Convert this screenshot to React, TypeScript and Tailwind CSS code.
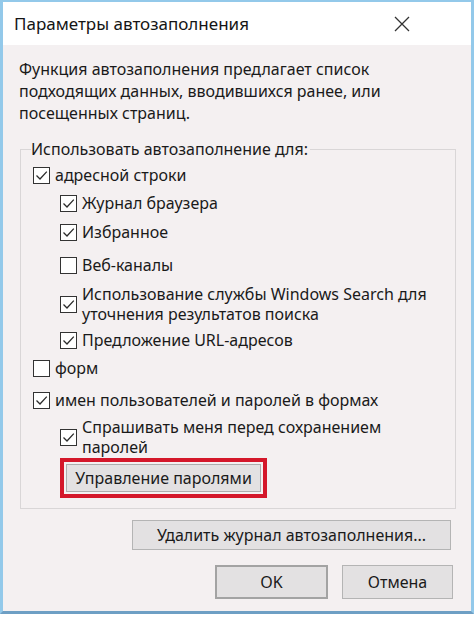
import type { ReactNode } from 'react';

const Box = ({ checked }: { checked: boolean }) => (
  <span className="w-[17px] h-[17px] shrink-0 border border-[#333333] bg-white flex items-center justify-center">
    {checked && (
      <svg width="15" height="15" viewBox="0 0 15 15" fill="none">
        <path d="M2.5 7.5 L6 11 L12.8 3.6" stroke="#2b2b2b" strokeWidth="1.3" />
      </svg>
    )}
  </span>
);

const Row = ({
  checked,
  level,
  className,
  children,
}: {
  checked: boolean;
  level: 1 | 2;
  className: string;
  children: ReactNode;
}) => (
  <div className={`flex items-center gap-[5px] ${level === 1 ? 'ml-[2px]' : 'ml-[29px]'} ${className}`}>
    <Box checked={checked} />
    <span className="leading-[20px]">{children}</span>
  </div>
);

const App = () => {
  return (
    <div
      className="w-[474px] h-[620px] bg-white text-[#1a1a1a] text-[16px]"
      style={{ fontFamily: '"Noto Sans", "Open Sans", sans-serif' }}
    >
      <div className="h-[614px] flex flex-col border-x-[3px] border-t-[2px] border-b-[3px] border-x-[#93c9ea] border-t-[#93c9ea] border-b-[#6e9fc4]">
        <div className="h-[43px] bg-white flex items-center justify-between pl-[11px] pr-[61px]">
          <span className="text-[17px] text-[#151515]">Параметры автозаполнения</span>
          <svg width="16" height="16" viewBox="0 0 16 16" fill="none">
            <path d="M1 1 L15 15 M15 1 L1 15" stroke="#333333" strokeWidth="1.3" />
          </svg>
        </div>

        <div className="flex-1 flex flex-col bg-[#f4f0f1] pl-[16px] pt-[13px]">
          <p className="leading-[22px] w-[420px]">
            Функция автозаполнения предлагает список подходящих данных, вводившихся ранее, или
            посещенных страниц.
          </p>

          <fieldset className="mt-[14px] ml-[1px] w-[436px] border border-[#d9d6d7] pl-[10px] pb-[10px]">
            <legend className="leading-[22px] pr-[2px]">Использовать автозаполнение для:</legend>
            <Row checked level={1} className="mt-[5px]">адресной строки</Row>
            <Row checked level={2} className="mt-[8px]">Журнал браузера</Row>
            <Row checked level={2} className="mt-[9px]">Избранное</Row>
            <Row checked={false} level={2} className="mt-[13px]">Веб-каналы</Row>
            <Row checked level={2} className="mt-[9px]">
              Использование службы Windows Search для
              <br />
              уточнения результатов поиска
            </Row>
            <Row checked level={2} className="mt-[6px]">Предложение URL-адресов</Row>
            <Row checked={false} level={1} className="mt-[8px]">форм</Row>
            <Row checked level={1} className="mt-[12px]">имен пользователей и паролей в формах</Row>
            <Row checked level={2} className="mt-[7px]">
              Спрашивать меня перед сохранением
              <br />
              паролей
            </Row>
            <div className="mt-[1px] ml-[29px] w-[207px] h-[40px] border-[4px] border-[#d4172a] p-[2px]">
              <div className="h-full border border-[#adadad] bg-[#e3e1e2] flex items-center justify-center">
                Управление паролями
              </div>
            </div>
          </fieldset>

          <div className="mt-[11px] flex justify-end pr-[20px]">
            <div className="w-[319px] h-[30px] border border-[#b4b4b4] bg-[#e3e1e2] flex items-center justify-center">
              Удалить журнал автозаполнения...
            </div>
          </div>

          <div className="mt-[15px] flex justify-end gap-[14px] pr-[18px]">
            <div className="w-[113px] h-[34px] border-2 border-[#a3a3a3] bg-[#e3e1e2] flex items-center justify-center">
              OK
            </div>
            <div className="w-[111px] h-[34px] border border-[#b4b4b4] bg-[#e3e1e2] flex items-center justify-center">
              Отмена
            </div>
          </div>
        </div>
      </div>
    </div>
  );
};

export default App;
